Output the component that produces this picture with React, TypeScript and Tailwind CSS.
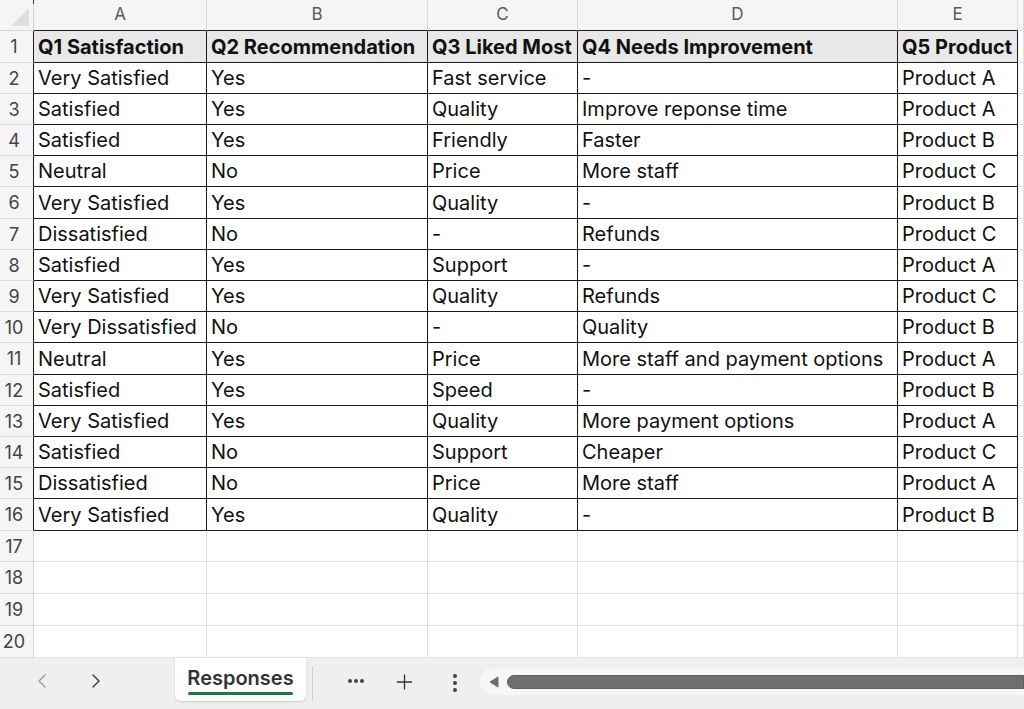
import React from "react";

const headers = ["Q1 Satisfaction", "Q2 Recommendation", "Q3 Liked Most", "Q4 Needs Improvement", "Q5 Product"];

const data: string[][] = [
  ["Very Satisfied", "Yes", "Fast service", "-", "Product A"],
  ["Satisfied", "Yes", "Quality", "Improve reponse time", "Product A"],
  ["Satisfied", "Yes", "Friendly", "Faster", "Product B"],
  ["Neutral", "No", "Price", "More staff", "Product C"],
  ["Very Satisfied", "Yes", "Quality", "-", "Product B"],
  ["Dissatisfied", "No", "-", "Refunds", "Product C"],
  ["Satisfied", "Yes", "Support", "-", "Product A"],
  ["Very Satisfied", "Yes", "Quality", "Refunds", "Product C"],
  ["Very Dissatisfied", "No", "-", "Quality", "Product B"],
  ["Neutral", "Yes", "Price", "More staff and payment options", "Product A"],
  ["Satisfied", "Yes", "Speed", "-", "Product B"],
  ["Very Satisfied", "Yes", "Quality", "More payment options", "Product A"],
  ["Satisfied", "No", "Support", "Cheaper", "Product C"],
  ["Dissatisfied", "No", "Price", "More staff", "Product A"],
  ["Very Satisfied", "Yes", "Quality", "-", "Product B"],
];

const colW = ["w-[173px]", "w-[221px]", "w-[150px]", "w-[320px]", "w-[120px]"];
const letters = ["A", "B", "C", "D", "E"];

// row heights for rows 1..20
const rowH = (n: number) =>
  n === 1 || n === 6 || n === 11 || n === 16 || n === 18 || n === 19 || n === 20 ? "h-[32px]" : "h-[31px]";

function RowHeader({ n, dark }: { n: number; dark: boolean }) {
  return (
    <div
      className={`w-[34px] shrink-0 flex items-center justify-center pr-[5px] bg-[#f5f5f5] border-b border-b-[#dcdcdc] border-r text-[18px] text-[#444] ${
        dark ? "border-r-[#1a1a1a]" : "border-r-[#d4d4d4]"
      }`}
    >
      {n}
    </div>
  );
}

function Cell({ w, text, bold, filled }: { w: string; text?: string; bold?: boolean; filled: boolean }) {
  return (
    <div
      className={`${w} shrink-0 flex items-center pl-[4px] overflow-hidden whitespace-nowrap border-r border-b text-[20px] text-[#111] ${
        filled ? "border-[#1a1a1a]" : "border-[#e1e1e1]"
      } ${bold ? "font-bold bg-[#e8e8e8]" : "bg-white"}`}
    >
      {text}
    </div>
  );
}

function Row({ n, cells, bold }: { n: number; cells?: string[]; bold?: boolean }) {
  const filled = !!cells;
  return (
    <div className={`flex ${rowH(n)}`}>
      <RowHeader n={n} dark={filled} />
      {colW.map((w, i) => (
        <Cell key={i} w={w} text={cells ? cells[i] : undefined} bold={bold} filled={filled} />
      ))}
      <div className="flex-1 border-r border-b border-[#e1e1e1] bg-white" />
    </div>
  );
}

function Chevron({ dir, color }: { dir: "l" | "r"; color: string }) {
  return (
    <svg width="12" height="16" viewBox="0 0 12 16" className={color}>
      <polyline
        points={dir === "l" ? "9,2 3,8 9,14" : "3,2 9,8 3,14"}
        fill="none"
        stroke="currentColor"
        strokeWidth="1.5"
        strokeLinecap="round"
        strokeLinejoin="round"
      />
    </svg>
  );
}

export default function App() {
  return (
    <div className="w-[1024px] h-[709px] overflow-hidden flex flex-col bg-white font-['Inter',sans-serif]">
      {/* column header */}
      <div className="flex h-[31px] bg-[#f5f5f5]">
        <div className="relative w-[34px] shrink-0 border-r border-b border-[#d4d4d4]">
          <div className="absolute right-[4px] bottom-[4px] w-0 h-0 border-l-[18px] border-l-transparent border-b-[18px] border-b-[#dedede]" />
          <div className="absolute right-[-1px] top-0 w-[1px] h-[4px] bg-[#333]" />
        </div>
        {colW.map((w, i) => (
          <div
            key={i}
            className={`${w} shrink-0 flex items-center justify-center border-r border-r-[#dcdcdc] border-b border-b-[#1a1a1a] text-[17px] text-[#5a5a5a]`}
          >
            {letters[i]}
          </div>
        ))}
        <div className="flex-1 border-r border-b border-[#dcdcdc]" />
      </div>

      <Row n={1} cells={headers} bold />
      {data.map((r, i) => (
        <Row key={i} n={i + 2} cells={r} />
      ))}
      {[17, 18, 19, 20].map((n) => (
        <Row key={n} n={n} />
      ))}

      {/* sheet tab bar */}
      <div className="flex-1 bg-[#efefef] flex items-start">
        <div className="w-[175px] h-[46px] flex items-center pl-[36px] gap-[42px]">
          <Chevron dir="l" color="text-[#a3a3a3]" />
          <Chevron dir="r" color="text-[#444]" />
        </div>
        <div className="relative w-[131px] h-[43px] bg-white rounded-b-[6px] shadow-[0_1px_2px_rgba(0,0,0,0.15)] flex items-center justify-center">
          <span className="text-[20px] font-semibold text-[#333] leading-none mb-[4px]">Responses</span>
          <div className="absolute left-[13px] right-[13px] bottom-[6px] h-[3px] bg-[#1c7a43] rounded-full" />
        </div>
        <div className="w-[1px] h-[34px] mt-[8px] ml-[6px] bg-[#cfcfcf]" />
        <div className="w-[83px] h-[46px] flex items-center justify-center gap-[2px] pl-[2px]">
          <span className="w-[4px] h-[4px] rounded-full bg-[#444]" />
          <span className="w-[4px] h-[4px] rounded-full bg-[#444]" />
          <span className="w-[4px] h-[4px] rounded-full bg-[#444]" />
        </div>
        <div className="w-[17px] h-[47px] flex items-center justify-center">
          <svg width="18" height="18" viewBox="0 0 18 18">
            <path d="M9 1 V17 M1 9 H17" stroke="#333" strokeWidth="1.4" />
          </svg>
        </div>
        <div className="ml-[40px] w-[4px] h-[49px] flex flex-col items-center justify-center gap-[3px]">
          <span className="w-[4px] h-[4px] rounded-full bg-[#444]" />
          <span className="w-[4px] h-[4px] rounded-full bg-[#444]" />
          <span className="w-[4px] h-[4px] rounded-full bg-[#444]" />
        </div>
        <div className="flex-1 ml-[23px] mt-[10px] h-[27px] bg-[#f6f6f6] rounded-l-full flex items-center pl-[8px]">
          <svg width="11" height="12" viewBox="0 0 11 12">
            <path d="M10 1 L2 6 L10 11 Z" fill="#6e6e6e" stroke="#6e6e6e" strokeLinejoin="round" />
          </svg>
          <div className="flex-1 ml-[8px] h-[14px] bg-[#6e6e6e] border border-[#5f5f5f] rounded-l-full" />
        </div>
      </div>
    </div>
  );
}
